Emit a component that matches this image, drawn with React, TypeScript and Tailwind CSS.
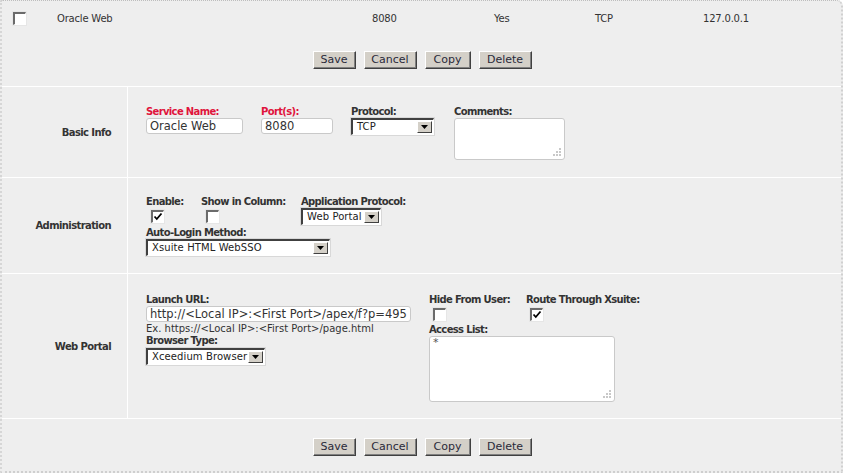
import React from "react";

const font = { fontFamily: "'DejaVu Sans', Verdana, sans-serif" };

function Check({ checked = false }: { checked?: boolean }) {
  return (
    <span className="relative inline-block w-[13px] h-[13px] bg-white border-t-2 border-l-2 border-t-[#6b6b6b] border-l-[#6b6b6b] border-b border-r border-b-white border-r-white box-border shadow-[0_0_0_1px_#e6e6e6]">
      {checked && (
        <svg className="absolute left-[0px] top-[0px]" width="10" height="10" viewBox="0 0 10 10">
          <path d="M1.5 4.5 L3.8 7 L8.5 1.5" stroke="#000" strokeWidth="1.8" fill="none" />
        </svg>
      )}
    </span>
  );
}

function Select({ value, width }: { value: string; width: string }) {
  return (
    <div
      className={`${width} h-[17px] flex items-stretch bg-white border-t-2 border-l-2 border-t-[#404040] border-l-[#404040] border-b border-r border-b-white border-r-white box-border shadow-[0_0_0_1px_#d8d8d8]`}
    >
      <div className="flex-1 text-[10px] leading-[14px] text-[#222] pl-[4px] overflow-hidden whitespace-nowrap tracking-[0.1px]">{value}</div>
      <div className="w-[15px] my-[1px] mr-[1px] bg-[#d4d0c8] border-t border-l border-t-white border-l-white border-b border-r border-b-[#404040] border-r-[#404040] flex items-center justify-center">
        <svg width="7" height="4" viewBox="0 0 7 4">
          <path d="M0 0 H7 L3.5 4 Z" fill="#000" />
        </svg>
      </div>
    </div>
  );
}

function Input({ value, width }: { value: string; width: string }) {
  return (
    <div className={`${width} h-[16px] bg-white border border-[#c9c9c9] rounded-[3px] text-[11.5px] leading-[14px] text-[#333] pl-[3px] overflow-hidden whitespace-nowrap`}>
      {value}
    </div>
  );
}

function TextArea({ width, height, value = "" }: { width: string; height: string; value?: string }) {
  return (
    <div className={`${width} ${height} relative bg-white border border-[#c9c9c9] rounded-[3px] text-[11px] leading-[12px] text-[#555] pl-[3px]`}>
      {value}
      <svg className="absolute right-[2px] bottom-[2px]" width="9" height="9" viewBox="0 0 9 9">
        <rect x="6" y="0" width="2" height="2" fill="#c8c8c8" />
        <rect x="6" y="3" width="2" height="2" fill="#c8c8c8" />
        <rect x="3" y="3" width="2" height="2" fill="#c8c8c8" />
        <rect x="6" y="6" width="2" height="2" fill="#c8c8c8" />
        <rect x="3" y="6" width="2" height="2" fill="#c8c8c8" />
        <rect x="0" y="6" width="2" height="2" fill="#c8c8c8" />
      </svg>
    </div>
  );
}

function Btn({ label, width }: { label: string; width: string }) {
  return (
    <div
      className={`${width} h-[18px] bg-[#d4d0c8] border-t border-l border-t-white border-l-white border-b border-r border-b-[#404040] border-r-[#404040] shadow-[inset_-1px_-1px_0_#808080] flex items-center justify-center text-[11px] leading-[14px] text-[#2a2a3a]`}
    >
      {label}
    </div>
  );
}

function Buttons() {
  return (
    <div className="flex justify-center gap-[8px] pl-[1px]">
      <Btn label="Save" width="w-[43px]" />
      <Btn label="Cancel" width="w-[53px]" />
      <Btn label="Copy" width="w-[46px]" />
      <Btn label="Delete" width="w-[53px]" />
    </div>
  );
}

function Label({ children, red = false }: { children: React.ReactNode; red?: boolean }) {
  return (
    <div className={`text-[10px] leading-[12px] font-bold tracking-[-0.65px] whitespace-nowrap ${red ? "text-[#e0143c]" : "text-[#333]"}`}>
      {children}
    </div>
  );
}

function Section({ title, height, children }: { title: string; height: string; children: React.ReactNode }) {
  return (
    <div className={`flex ${height} border-t border-white`}>
      <div className="w-[126px] border-r border-white flex items-center justify-end pr-[16px]">
        <span className="text-[10px] font-bold tracking-[-0.6px] text-[#333]">{title}</span>
      </div>
      <div className="flex-1 pl-[18px]">{children}</div>
    </div>
  );
}

export default function App() {
  return (
    <div style={font} className="w-[845px] h-[474px] bg-white">
      <div className="w-[843px] h-[473px] bg-[#eeeeee] border-t border-dotted border-t-[#bdbdbd] border-l-2 border-r-2 border-b-2 border-l-[#d6d6d6] border-r-[#d0d0d0] border-b-[#cfcfcf] rounded-tr-[6px] box-border flex flex-col">
        {/* header row */}
        <div className="h-[35px] flex items-center text-[10px] text-[#333] tracking-[-0.2px]">
          <div className="w-[55px] pl-[11px] flex items-center">
            <Check />
          </div>
          <div className="w-[315px]">Oracle Web</div>
          <div className="w-[122px]">8080</div>
          <div className="w-[101px]">Yes</div>
          <div className="w-[108px]">TCP</div>
          <div>127.0.0.1</div>
        </div>
        {/* top buttons */}
        <div className="h-[50px] pt-[15px]">
          <Buttons />
        </div>

        <Section title="Basic Info" height="h-[91px]">
          <div className="pt-[19px] flex">
            <div className="w-[115px]">
              <Label red>Service Name:</Label>
              <Input value="Oracle Web" width="w-[97px]" />
            </div>
            <div className="w-[90px]">
              <Label red>Port(s):</Label>
              <Input value="8080" width="w-[72px]" />
            </div>
            <div className="w-[103px]">
              <Label>Protocol:</Label>
              <Select value="TCP" width="w-[83px]" />
            </div>
            <div>
              <Label>Comments:</Label>
              <TextArea width="w-[111px]" height="h-[42px]" />
            </div>
          </div>
        </Section>

        <Section title="Administration" height="h-[96px]">
          <div className="pt-[18px]">
            <div className="flex">
              <div className="w-[55px]">
                <Label>Enable:</Label>
                <div className="pl-[5px] pt-[2px] leading-none flex">
                  <Check checked />
                </div>
              </div>
              <div className="w-[100px]">
                <Label>Show in Column:</Label>
                <div className="pl-[5px] pt-[2px] leading-none flex">
                  <Check />
                </div>
              </div>
              <div>
                <Label>Application Protocol:</Label>
                <Select value="Web Portal" width="w-[80px]" />
              </div>
            </div>
            <div className="pt-[2px]">
              <Label>Auto-Login Method:</Label>
              <Select value="Xsuite HTML WebSSO" width="w-[184px]" />
            </div>
          </div>
        </Section>

        <Section title="Web Portal" height="h-[145px]">
          <div className="pt-[20px] flex">
            <div className="w-[283px]">
              <Label>Launch URL:</Label>
              <Input value="http://<Local IP>:<First Port>/apex/f?p=495" width="w-[265px]" />
              <div className="text-[10px] leading-[12px] text-[#333] mt-[1px] whitespace-nowrap">
                Ex. https://&lt;Local IP&gt;:&lt;First Port&gt;/page.html
              </div>
              <Label>Browser Type:</Label>
              <div className="pt-[1px]">
                <Select value="Xceedium Browser" width="w-[119px]" />
              </div>
            </div>
            <div>
              <div className="flex">
                <div className="w-[97px]">
                  <Label>Hide From User:</Label>
                  <div className="pl-[4px] pt-[2px] leading-none flex">
                    <Check />
                  </div>
                </div>
                <div>
                  <Label>Route Through Xsuite:</Label>
                  <div className="pl-[4px] pt-[2px] leading-none flex">
                    <Check checked />
                  </div>
                </div>
              </div>
              <div className="pt-[3px]">
                <Label>Access List:</Label>
                <TextArea width="w-[186px]" height="h-[66px]" value="*" />
              </div>
            </div>
          </div>
        </Section>

        <div className="flex-1 border-t border-white pt-[19px]">
          <Buttons />
        </div>
      </div>
    </div>
  );
}
